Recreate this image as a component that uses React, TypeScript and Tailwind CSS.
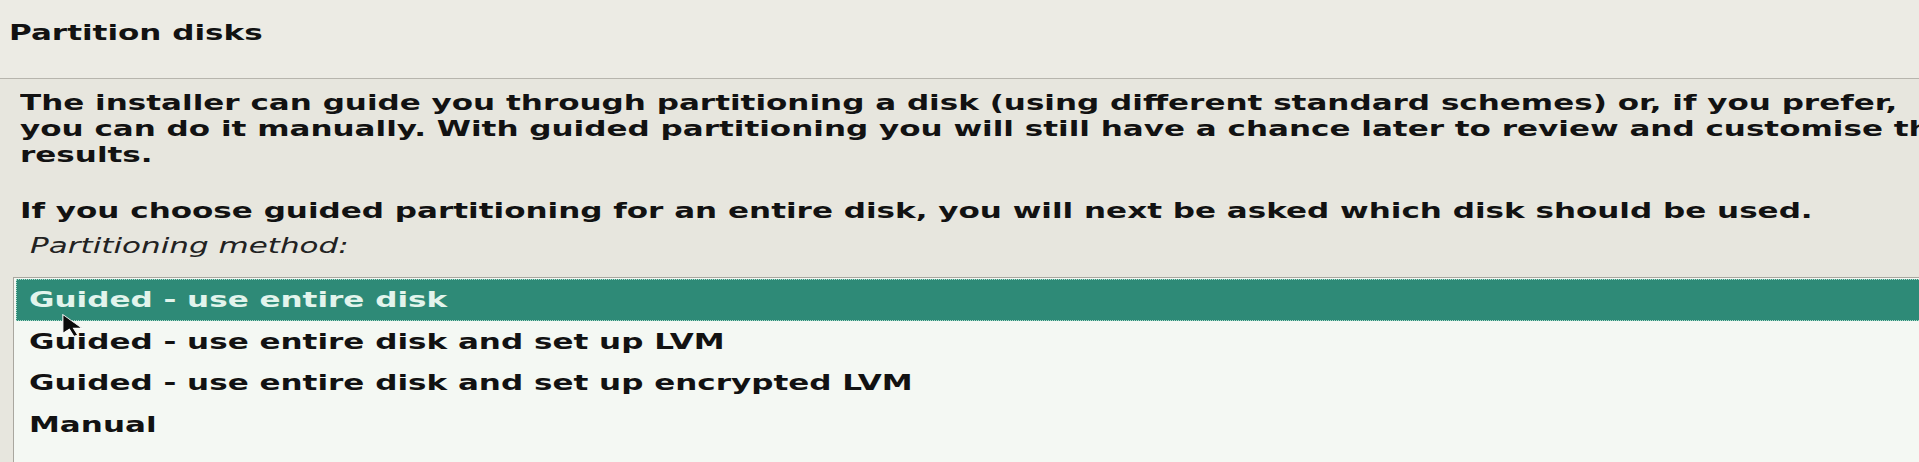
import React from "react";

const S = "inline-block origin-left scale-x-[1.41] whitespace-nowrap";

function Line({ children, className = "" }: { children: React.ReactNode; className?: string }) {
  return (
    <div className={"h-[26px] leading-[26px] whitespace-nowrap " + className}>
      <span className={S}>{children}</span>
    </div>
  );
}

function Row({ children, selected = false }: { children: React.ReactNode; selected?: boolean }) {
  if (selected) {
    return (
      <div className="h-[41.5px] leading-[39.5px] pl-[12px] bg-[#2e8a77] border border-dotted border-[#a9dccb] text-[#e2f4ec] font-bold whitespace-nowrap">
        <span className={S}>{children}</span>
      </div>
    );
  }
  return (
    <div className="h-[41.5px] leading-[41.5px] pl-[13px] text-[#121212] font-bold whitespace-nowrap">
      <span className={S}>{children}</span>
    </div>
  );
}

export default function App() {
  return (
    <div className="relative w-[1919px] h-[462px] overflow-hidden bg-[#e7e6de] font-['DejaVu_Sans',sans-serif] text-[22px] text-[#121212]">
      <div className="h-[79px] bg-[#ecebe4] border-b border-[#b7b5ad] pl-[9px] pt-[20px]">
        <Line className="font-bold">Partition disks</Line>
      </div>
      <div className="pl-[20px] pt-[11px] font-bold">
        <Line>
          The installer can guide you through partitioning a disk (using different standard schemes) or, if you prefer,
        </Line>
        <Line>
          you can do it manually. With guided partitioning you will still have a chance later to review and customise the
        </Line>
        <Line>results.</Line>
        <Line className="mt-[30px]">
          If you choose guided partitioning for an entire disk, you will next be asked which disk should be used.
        </Line>
        <Line className="mt-[9px] pl-[10px] font-normal italic text-[#222222]">Partitioning method:</Line>
      </div>
      <div className="mt-[18px] ml-[13px] w-[2000px] h-[200px] border-l border-t border-[#a9a79f] bg-[#f4f8f3] pt-[1px] pl-[2px]">
        <Row selected>Guided - use entire disk</Row>
        <Row>Guided - use entire disk and set up LVM</Row>
        <Row>Guided - use entire disk and set up encrypted LVM</Row>
        <Row>Manual</Row>
      </div>
      <svg
        className="absolute left-[62px] top-[314px]"
        width="21"
        height="23"
        viewBox="0 0 12 19"
        preserveAspectRatio="none"
      >
        <path d="M0.5 0.5 L0.5 16 L4.2 12.4 L6.8 18.4 L9 17.4 L6.5 11.6 L11.3 11.6 Z" fill="#0b0b0b" stroke="#ffffff" strokeWidth="0.6" />
      </svg>
    </div>
  );
}
